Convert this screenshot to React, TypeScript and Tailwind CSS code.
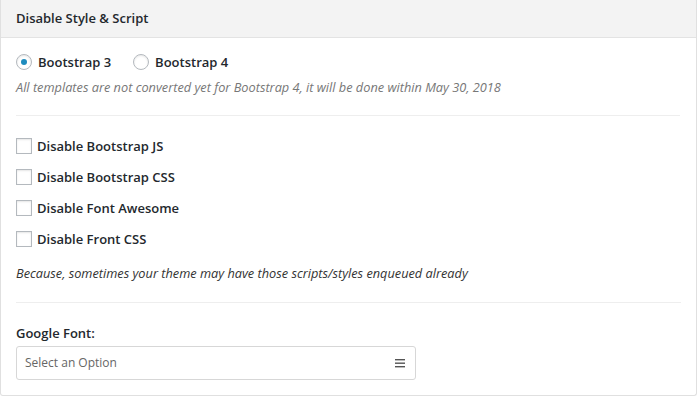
import React from "react";

const font = { fontFamily: '"Open Sans", "Noto Sans", sans-serif' };

function Check({ label }: { label: string }) {
  return (
    <div className="flex items-center h-[16px] gap-[5px]">
      <span className="w-[16px] h-[16px] border border-[#b4b9be] bg-white shadow-[inset_0_1px_2px_rgba(0,0,0,0.1)] shrink-0" />
      <span className="text-[13px] font-semibold text-[#23282d] leading-none">{label}</span>
    </div>
  );
}

export default function App() {
  return (
    <div className="w-[697px] h-[396px] bg-white" style={font}>
      <div className="w-[697px] h-[396px] border-x border-b border-[#e0e0e0] rounded-b-[3px] bg-white flex flex-col">
        <div className="h-[38px] bg-[#f3f3f3] border-b border-[#e3e3e3] flex items-center px-[15px] shrink-0">
          <span className="text-[13px] font-semibold text-[#23282d]">Disable Style &amp; Script</span>
        </div>
        <div className="px-[15px] flex flex-col">
          <div className="flex items-center h-[16px] mt-[16px] gap-[6px]">
            <span className="w-[16px] h-[16px] rounded-full border border-[#b4b9be] flex items-center justify-center shadow-[inset_0_1px_2px_rgba(0,0,0,0.1)]">
              <span className="w-[6px] h-[6px] rounded-full bg-[#1e8cbe]" />
            </span>
            <span className="text-[13px] font-semibold text-[#23282d] leading-none">Bootstrap 3</span>
            <span className="w-[16px] h-[16px] rounded-full border border-[#b4b9be] ml-[16px] shadow-[inset_0_1px_2px_rgba(0,0,0,0.1)]" />
            <span className="text-[13px] font-semibold text-[#23282d] leading-none">Bootstrap 4</span>
          </div>
          <p className="text-[12.75px] italic text-[#777] mt-[9px] leading-[16px]">
            All templates are not converted yet for Bootstrap 4, it will be done within May 30, 2018
          </p>
          <div className="h-px bg-[#eeeeee] mt-[20px] mr-[1px]" />
          <div className="flex flex-col gap-[15px] mt-[22px]">
            <Check label="Disable Bootstrap JS" />
            <Check label="Disable Bootstrap CSS" />
            <Check label="Disable Font Awesome" />
            <Check label="Disable Front CSS" />
          </div>
          <p className="text-[12.75px] italic text-[#333] mt-[18px] leading-[16px]">
            Because, sometimes your theme may have those scripts/styles enqueued already
          </p>
          <div className="h-px bg-[#eeeeee] mt-[21px]" />
          <div className="text-[13px] font-semibold text-[#23282d] mt-[21px] leading-[18px]">Google Font:</div>
          <div className="w-[400px] h-[34px] mt-[4px] border border-[#d7d7d7] rounded-[3px] flex items-center justify-between pl-[8px] pr-[10px]">
            <span className="text-[12px] text-[#666]">Select an Option</span>
            <svg width="10" height="9" viewBox="0 0 10 9">
              <rect x="0" y="0" width="10" height="1.4" fill="#555" />
              <rect x="0" y="3.5" width="10" height="1.4" fill="#555" />
              <rect x="0" y="7" width="10" height="1.4" fill="#555" />
            </svg>
          </div>
        </div>
      </div>
    </div>
  );
}
